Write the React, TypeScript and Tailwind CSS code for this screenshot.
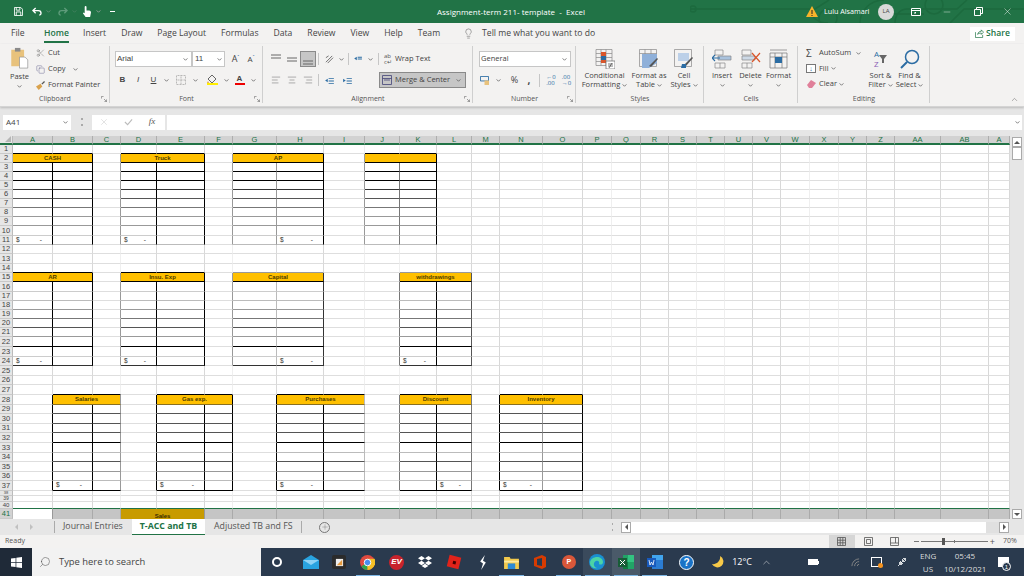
import type { ReactNode } from "react";
import { AlignCenter, AlignLeft, AlignRight, ChevronUp, Copy, Lightbulb, Minus, Plus, Scissors, Search, X } from "lucide-react";

const columns = ["A", "B", "C", "D", "E", "F", "G", "H", "I", "J", "K", "L", "M", "N", "O", "P", "Q", "R", "S", "T", "U", "V", "W", "X", "Y", "Z", "AA", "AB", "A"];
const lightCols = [2, 5, 8, 9, 13, 15, 18, 19, 22, 23];

const rightLine: Record<string, string> = {
  k: "border-r-black",
  "3": "border-r-[#333]",
  "5": "border-r-[#555]",
  "7": "border-r-[#777]",
  "9": "border-r-[#999]",
  b: "border-r-[#bbb]",
};
const bottomLine: Record<string, string> = {
  k: "border-b-black",
  "3": "border-b-[#333]",
  "5": "border-b-[#555]",
  "7": "border-b-[#777]",
  "9": "border-b-[#999]",
  b: "border-b-[#bbb]",
  c: "border-b-[#ccc]",
};

type Account = { name: string; row: number; col: number; top: string; lines: string; left: string; mid: string; right: string; total: number };

// row = header row, the rows under it use `lines` for their bottom border
const accounts: Account[] = [
  { name: "CASH", row: 2, col: 0, top: "k", lines: "kkk35799c", left: "", mid: "k", right: "k", total: 0 },
  { name: "Truck", row: 2, col: 3, top: "k", lines: "kkk35799c", left: "9", mid: "k", right: "k", total: 3 },
  { name: "AP", row: 2, col: 6, top: "k", lines: "kkk35799c", left: "9", mid: "9", right: "k", total: 7 },
  { name: "", row: 2, col: 9, top: "k", lines: "kkk35799c", left: "9", mid: "7", right: "k", total: -1 },
  { name: "AR", row: 15, col: 0, top: "k", lines: "kcb9759kc", left: "", mid: "k", right: "k", total: 0 },
  { name: "Insu. Exp", row: 15, col: 3, top: "k", lines: "kcb9759kc", left: "9", mid: "k", right: "k", total: 3 },
  { name: "Capital", row: 15, col: 6, top: "9", lines: "kcb9759kc", left: "9", mid: "b", right: "3", total: 7 },
  { name: "withdrawings", row: 15, col: 10, top: "9", lines: "7cb9759kc", left: "7", mid: "k", right: "5", total: 10 },
  { name: "Salaries", row: 28, col: 1, top: "k", lines: "k555kb59b", left: "k", mid: "k", right: "9", total: 1 },
  { name: "Gas exp.", row: 28, col: 4, top: "k", lines: "k555kb59b", left: "k", mid: "k", right: "k", total: 4 },
  { name: "Purchases", row: 28, col: 7, top: "k", lines: "k555kb59b", left: "k", mid: "k", right: "b", total: 7 },
  { name: "Discount", row: 28, col: 10, top: "k", lines: "7555kb59b", left: "7", mid: "k", right: "7", total: 11 },
  { name: "Inventory", row: 28, col: 13, top: "k", lines: "k555kb59b", left: "k", mid: "9", right: "k", total: 13 },
];

function bottomOf(r: number, c: number) {
  for (const a of accounts) {
    if (c !== a.col && c !== a.col + 1) continue;
    if (r === a.row - 1) return bottomLine[a.top];
    if (r > a.row && r <= a.row + 9) return r === a.row + 9 ? bottomLine[a.row === 2 ? "b" : a.row === 15 ? "3" : "k"] : bottomLine[a.lines[r - a.row]];
  }
  return r === 40 ? "border-b-[#217346]" : "border-b-[#dedede]";
}

function rightOf(r: number, c: number) {
  for (const a of accounts) {
    if (r < a.row || r > a.row + 9) continue;
    if (c === a.col - 1 && a.left) return rightLine[a.left];
    if (c === a.col && r > a.row) return rightLine[a.mid];
    if (c === a.col + 1) return rightLine[a.right];
  }
  return lightCols.includes(c) ? "border-r-[#efefef]" : "border-r-[#d8d8d8]";
}

function SheetCell({ r, c }: { r: number; c: number }) {
  const header = accounts.find((a) => a.row === r && a.col === c);
  const covered = accounts.find((a) => a.row === r && a.col + 1 === c);
  if (covered) return null;

  if (r === 41) {
    if (c === 4) return null;
    if (c === 3) {
      return <div className="col-span-2 overflow-hidden bg-[#c89b00] border-r border-r-[#999] text-center text-[6px] font-bold leading-[15px] text-[#3a2c00]">Sales</div>;
    }
    return <div className={`border-r ${c === 0 ? "bg-white border-r-[#999]" : "bg-[#c5c5c5] border-r-[#aaa]"}`} />;
  }

  if (header) {
    return (
      <div className={`col-span-2 flex items-center justify-center overflow-hidden bg-[#ffc000] border-r border-b text-[6px] font-bold text-[#4a3a00] ${rightLine[header.right]} ${header.row === 28 ? "border-b-[#8a7020]" : "border-b-black"}`}>
        {header.name}
      </div>
    );
  }

  const total = accounts.find((a) => a.row + 9 === r && a.total === c);
  return (
    <div className={`min-w-0 border-r border-b ${rightOf(r, c)} ${bottomOf(r, c)} ${total ? "flex items-center justify-between pl-[3px] pr-[10px] text-[6.5px] leading-none text-[#333]" : ""}`}>
      {total && (
        <>
          <span>$</span>
          <span>-</span>
        </>
      )}
    </div>
  );
}

function rowLabelSize(r: number) {
  if (r === 38) return "text-[4px]";
  if (r === 39) return "text-[5px]";
  if (r === 40) return "text-[6px]";
  return "text-[7.5px]";
}

function Sheet() {
  const rows = Array.from({ length: 41 }, (_, i) => i + 1);
  return (
    <div className="grid w-[1010px] grid-cols-[13px_40px_40px_28px_36px_48px_28px_44px_47px_41px_35px_37px_35px_28px_43px_40px_29px_29px_28px_28px_28px_28px_28px_29px_29px_28px_28px_46px_48px_21px] grid-rows-[9px_9px_9px_9px_9px_9px_9px_9px_9px_9px_10px_9px_9px_10px_9px_9px_10px_9px_9px_9px_9px_9px_10px_10px_9px_10px_9px_10px_10px_9px_10px_9px_10px_10px_9px_10px_9px_10px_5px_6px_7px_10px] font-['Liberation_Sans',sans-serif]">
      <div className="flex items-end justify-end border-r border-b-2 border-r-[#bbb] border-b-[#217346] bg-[#e6e6e6] pr-[1px] pb-[1px]">
        <div className="h-0 w-0 border-b-[6px] border-l-[6px] border-b-[#b5b5b5] border-l-transparent" />
      </div>
      {columns.map((label, i) => (
        <div key={i} className="flex items-center justify-center overflow-hidden border-r border-b-2 border-r-[#aeaeae] border-b-[#217346] bg-[#d2d2d2] text-[7.5px] leading-none text-[#217346]">
          {label}
        </div>
      ))}
      {rows.flatMap((r) => [
        <div key={`h${r}`} className={`flex items-center justify-center overflow-hidden border-r border-b border-r-[#bbb] border-b-[#c9c9c9] leading-none ${rowLabelSize(r)} ${r === 41 ? "bg-[#d2d2d2] text-[#217346]" : "bg-[#e6e6e6] text-[#444]"}`}>
          {r}
        </div>,
        ...columns.map((_, c) => <SheetCell key={`${r}-${c}`} r={r} c={c} />),
      ])}
    </div>
  );
}

function Chev({ className = "" }: { className?: string }) {
  return (
    <svg viewBox="0 0 6 4" className={`h-[3px] w-[5px] shrink-0 ${className}`} fill="none" stroke="#555" strokeWidth="1">
      <path d="M.5.5 3 3 5.5.5" />
    </svg>
  );
}

function Group({ width, label, launcher, children }: { width: string; label: string; launcher?: boolean; children: ReactNode }) {
  return (
    <div className={`relative flex shrink-0 flex-col ${width}`}>
      <div className="min-h-0 flex-1">{children}</div>
      <div className="h-[13px] pb-[2px] text-center text-[7px] leading-[11px] text-[#555]">{label}</div>
      <div className="absolute top-[2px] right-0 bottom-[3px] w-px bg-[#cfcfcf]" />
      {launcher && (
        <svg viewBox="0 0 7 7" className="absolute right-[3px] bottom-[4px] h-[6px] w-[6px]" fill="none" stroke="#777" strokeWidth=".8">
          <path d="M.5 3V.5H3M3.5 3.5l3 3M6.500 4v2.500H4" />
        </svg>
      )}
    </div>
  );
}

function BigButton({ width, top, bottom, arrow, children }: { width: string; top: string; bottom?: string; arrow?: boolean; children: ReactNode }) {
  return (
    <div className={`flex shrink-0 flex-col items-center ${width}`}>
      <div className="flex h-[21px] items-end justify-center">{children}</div>
      <div className="mt-[1px] text-[7.5px] leading-[10px] whitespace-nowrap text-[#444]">{top}</div>
      <div className="flex h-[10px] items-center gap-[2px] text-[7.5px] whitespace-nowrap text-[#444]">
        {bottom}
        {arrow && <Chev />}
      </div>
    </div>
  );
}

function Slot({ width, children }: { width: string; children?: ReactNode }) {
  return <div className={`flex shrink-0 items-center justify-center ${width}`}>{children}</div>;
}

function Lines({ rows }: { rows: string }) {
  return (
    <svg viewBox="0 0 12 12" className="h-[12px] w-[12px]" stroke="#666" strokeWidth="1">
      <path d={rows} />
    </svg>
  );
}

function TitleBar() {
  return (
    <div className="relative flex h-[23px] shrink-0 items-center bg-[#217346] text-white">
      <svg viewBox="0 0 334 23" className="absolute top-0 right-0 h-[23px] w-[334px]" fill="none" stroke="#1c6a3e" strokeWidth="1.500">
        <path d="M0 9h30M30 9h95l14-9M120 9c0 8 8 14 18 14M170 23c0-12 10-23 24-23M205 23c0-8 5-14 12-14h50l10-9M190 14h44M260 23l14-14h60" />
        <circle cx="138" cy="18" r="9" />
        <circle cx="244" cy="5" r="9" />
        <circle cx="3" cy="9" r="3" />
      </svg>
      <div className="relative flex items-center">
        <Slot width="w-[10px] ml-[13px]">
          <svg viewBox="0 0 10 10" className="h-[9px] w-[9px]" fill="none" stroke="white" strokeWidth="1">
            <path d="M.5.5h7l2 2v7H.5zM2.500.5v3h4v-3M2.500 9.500v-4h5v4" />
          </svg>
        </Slot>
        <Slot width="w-[10px] ml-[9px]">
          <svg viewBox="0 0 11 10" className="h-[9px] w-[10px]" fill="none" stroke="white" strokeWidth="1.500">
            <path d="M4 1 1 4l3 3M1 4h6c2 0 3 1.500 3 3s-1 2-2 2" />
          </svg>
        </Slot>
        <Slot width="w-[12px]"><Chev className="opacity-60 invert" /></Slot>
        <Slot width="w-[18px]">
          <svg viewBox="0 0 11 10" className="h-[9px] w-[10px]" fill="none" stroke="#5f9c7b" strokeWidth="1.500">
            <path d="M7 1l3 3-3 3M10 4H4C2 4 1 5.500 1 7s1 2 2 2" />
          </svg>
        </Slot>
        <Slot width="w-[5px]"><Chev className="opacity-30 invert" /></Slot>
        <Slot width="w-[18px]">
          <svg viewBox="0 0 10 12" className="h-[11px] w-[9px]" fill="white">
            <path d="M3 1a1 1 0 0 1 2 0v4h3c1 0 2 1 2 2l-1 5H4L1 8l1-1 1 1z" />
          </svg>
        </Slot>
        <Slot width="w-[6px]"><Chev className="invert" /></Slot>
        <Slot width="w-[22px]">
          <div className="h-[2px] w-[5px] border-t border-white" />
        </Slot>
      </div>
      <div className="relative ml-[313px] w-[150px] text-center text-[8px] whitespace-pre">Assignment-term 211- template  -  Excel</div>
      <div className="relative ml-[220px] flex items-center">
        <svg viewBox="0 0 12 11" className="h-[11px] w-[12px]">
          <path d="M6 0 12 11H0z" fill="#f7b32b" />
          <path d="M6 4v4M6 9v1" stroke="#222" strokeWidth="1" />
        </svg>
      </div>
      <div className="relative ml-[6px] w-[48px] text-[7.2px] whitespace-nowrap">Lulu Alsamari</div>
      <div className="relative ml-[6px] flex h-[16px] w-[16px] items-center justify-center rounded-full bg-[#d9d9d9] text-[6px] text-[#444]">LA</div>
      <svg viewBox="0 0 10 8" className="relative ml-[17px] h-[8px] w-[10px]" fill="none" stroke="white" strokeWidth="1">
        <path d="M.5.500h9v7h-9zM.5 2.500h9M3 5h2l-1-1" />
      </svg>
      <Minus className="relative ml-[21px] h-[10px] w-[10px]" strokeWidth={1} />
      <svg viewBox="0 0 9 9" className="relative ml-[22px] h-[9px] w-[9px]" fill="none" stroke="white" strokeWidth="1">
        <path d="M.5 2.500h6v6h-6zM2.500 2.500v-2h6v6h-2" />
      </svg>
      <X className="relative ml-[19px] h-[11px] w-[11px]" strokeWidth={1} />
    </div>
  );
}

function MenuTabs() {
  const tabs = ["Insert", "Draw", "Page Layout", "Formulas", "Data", "Review", "View", "Help", "Team"];
  return (
    <div className="flex h-[21px] shrink-0 items-center bg-[#f3f2f1] text-[8.6px] text-[#444]">
      <div className="ml-[11px] w-[33px]">File</div>
      <div className="relative flex h-full w-[39px] items-center font-semibold text-[#217346]">
        Home
        <div className="absolute bottom-[1px] left-0 h-[2px] w-[25px] bg-[#217346]" />
      </div>
      <div className="flex gap-[15px] whitespace-nowrap">
        {tabs.map((t) => (
          <span key={t}>{t}</span>
        ))}
      </div>
      <Lightbulb className="ml-[23px] h-[11px] w-[11px]" strokeWidth={1} />
      <div className="ml-[8px] whitespace-nowrap">Tell me what you want to do</div>
      <div className="mr-[9px] ml-auto flex h-[14px] w-[45px] items-center justify-center gap-[2px] bg-white font-semibold text-[#217346]">
        <svg viewBox="0 0 10 10" className="h-[9px] w-[9px]" fill="none" stroke="#217346" strokeWidth=".8">
          <path d="M.5 3.500v6h8v-3M3 6c0-2 2-3.500 4-3.500V1l2.500 2.500L7 6V4.500C5 4.500 3.500 5 3 6z" />
        </svg>
        Share
      </div>
    </div>
  );
}

function Ribbon() {
  return (
    <div className="relative flex h-[63px] shrink-0 border-b border-[#d4d4d4] bg-[#f3f2f1] text-[7.5px] text-[#444] shadow-[0_1px_2px_#bbb]">
      <Group width="w-[110px]" label="Clipboard" launcher>
        <div className="flex">
          <div className="ml-[9px] flex w-[21px] flex-col items-center">
            <svg viewBox="0 0 20 24" className="mt-[3px] h-[22px] w-[19px]">
              <path d="M1 3h14v18H1z" fill="#e8c27c" />
              <path d="M5 1h6v4H5z" fill="#8a8a8a" />
              <path d="M10 11h6l3 3v9h-9z" fill="white" stroke="#8a8a8a" strokeWidth=".7" />
            </svg>
            <div className="mt-[2px] leading-[10px]">Paste</div>
            <Chev className="mt-[4px]" />
          </div>
          <div className="mt-[1px] ml-[6px] flex flex-col">
            <div className="flex h-[16px] items-center gap-[3px]"><Scissors className="h-[10px] w-[9px] text-[#555]" strokeWidth={1} />Cut</div>
            <div className="flex h-[16px] items-center gap-[3px]"><Copy className="h-[9px] w-[9px] text-[#447]" strokeWidth={1} />Copy<Chev className="ml-[4px]" /></div>
            <div className="flex h-[16px] items-center gap-[3px] whitespace-nowrap">
              <svg viewBox="0 0 10 10" className="h-[9px] w-[9px]"><path d="M0 6 5 3l2 3-4 4z" fill="#d9a24d" /><path d="M6 3l3-3 1 1-3 3z" fill="#555" /></svg>
              Format Painter
            </div>
          </div>
        </div>
      </Group>
      <Group width="w-[153px]" label="Font" launcher>
        <div className="flex flex-col gap-[5px] pt-[7px] pl-[5px]">
          <div className="flex h-[16px] items-center">
            <div className="flex h-full w-[77px] items-center justify-between border border-[#c6c6c6] bg-white pr-[3px] pl-[1px] font-['Liberation_Sans',sans-serif] text-[8px]">Arial<Chev /></div>
            <div className="flex h-full w-[33px] items-center justify-between border border-[#c6c6c6] bg-white px-[2px] font-['Liberation_Sans',sans-serif] text-[8px]">11<Chev /></div>
            <Slot width="w-[17px] text-[9px] ml-[2px]">A<sup className="text-[5px] text-[#2b6ca3]">ˆ</sup></Slot>
            <Slot width="w-[14px] text-[8px]">A<sup className="text-[5px] text-[#2b6ca3]">ˇ</sup></Slot>
          </div>
          <div className="flex h-[16px] items-center font-['Liberation_Sans',sans-serif] text-[8px] text-[#444]">
            <Slot width="w-[15px] ml-[0px] font-bold">B</Slot>
            <Slot width="w-[16px] italic">I</Slot>
            <Slot width="w-[15px] underline">U</Slot>
            <Slot width="w-[11px]"><Chev /></Slot>
            <Slot width="w-[18px]">
              <svg viewBox="0 0 10 10" className="h-[10px] w-[10px]" fill="none" stroke="#aaa" strokeWidth=".8" strokeDasharray="1 .5"><path d="M.5.5h9v9h-9zM5 .5v9M.5 5h9" /></svg>
            </Slot>
            <Slot width="w-[11px]"><Chev /></Slot>
            <Slot width="w-[22px]">
              <div className="flex flex-col items-center">
                <svg viewBox="0 0 10 8" className="h-[8px] w-[10px]"><path d="M5 0 9 4 5 8 1 4z" fill="none" stroke="#666" /><path d="M1 6l1 2H0z" fill="#e8a33d" /></svg>
                <div className="h-[2px] w-[11px] bg-[#ffee00]" />
              </div>
            </Slot>
            <Slot width="w-[7px]"><Chev /></Slot>
            <Slot width="w-[19px]">
              <div className="flex flex-col items-center leading-[8px] font-bold">A<div className="h-[2px] w-[10px] bg-[#e00]" /></div>
            </Slot>
            <Slot width="w-[8px]"><Chev /></Slot>
          </div>
        </div>
      </Group>
      <Group width="w-[210px]" label="Alignment" launcher>
        <div className="flex flex-col gap-[5px] pt-[7px] pl-[5px]">
          <div className="flex h-[16px] items-center">
            <Slot width="w-[16px]"><Lines rows="M1 2h10M1 5h10" /></Slot>
            <Slot width="w-[16px]"><Lines rows="M1 5h10M1 8h10" /></Slot>
            <Slot width="w-[16px] h-[16px] bg-[#c6c6c6] border border-[#8a8a8a]"><Lines rows="M1 8h10M1 11h10" /></Slot>
            <div className="mx-[2px] h-[12px] w-px bg-[#c6c6c6]" />
            <Slot width="w-[17px]">
              <svg viewBox="0 0 10 10" className="h-[9px] w-[9px]" fill="none" stroke="#666"><path d="M1 8 8 1M3 9l6-6M1 3l3-2" /></svg>
            </Slot>
            <Slot width="w-[7px]"><Chev /></Slot>
            <div className="mx-[3px] h-[12px] w-px bg-[#c6c6c6]" />
            <Slot width="w-[12px]">
              <svg viewBox="0 0 10 7" className="h-[6px] w-[9px]"><path d="M0 3 3 1v4zM4 1h5v1H4zM4 3h5v1H4z" fill="#2b6ca3" /></svg>
            </Slot>
            <Slot width="w-[12px]"><Chev /></Slot>
            <div className="mx-[2px] h-[12px] w-px bg-[#c6c6c6]" />
            <span className="ml-[3px] text-[6px] leading-[6px] text-[#555]">ab<br />c↵</span>
            <span className="ml-[3px] whitespace-nowrap">Wrap Text</span>
          </div>
          <div className="flex h-[16px] items-center">
            <Slot width="w-[16px]"><AlignLeft className="h-[10px] w-[10px] text-[#666]" strokeWidth={1.2} /></Slot>
            <Slot width="w-[16px]"><AlignCenter className="h-[10px] w-[10px] text-[#666]" strokeWidth={1.2} /></Slot>
            <Slot width="w-[16px]"><AlignRight className="h-[10px] w-[10px] text-[#666]" strokeWidth={1.2} /></Slot>
            <div className="mx-[2px] h-[12px] w-px bg-[#c6c6c6]" />
            <Slot width="w-[16px]">
              <svg viewBox="0 0 10 8" className="h-[7px] w-[9px]"><path d="M0 4 3 2v4zM4 1h6v1H4zM4 4h6v1H4zM4 7h6v1H4z" fill="#2b6ca3" /></svg>
            </Slot>
            <Slot width="w-[20px]">
              <svg viewBox="0 0 10 8" className="h-[7px] w-[9px]"><path d="M3 4 0 2v4zM4 1h6v1H4zM4 4h6v1H4zM4 7h6v1H4z" fill="#2b6ca3" /></svg>
            </Slot>
            <div className="ml-[22px] flex h-[16px] w-[87px] items-center gap-[3px] border border-[#8a8a8a] bg-[#c6c6c6] px-[2px] whitespace-nowrap">
              <svg viewBox="0 0 10 10" className="h-[10px] w-[10px]" fill="none" stroke="#447" strokeWidth=".8"><path d="M.5.5h9v9h-9zM.5 3.500h9M2 5h6" /></svg>
              Merge &amp; Center
              <Chev className="ml-auto mr-[2px]" />
            </div>
          </div>
        </div>
      </Group>
      <Group width="w-[103px]" label="Number" launcher>
        <div className="flex flex-col gap-[5px] pt-[7px] pl-[6px]">
          <div className="flex h-[16px] w-[92px] items-center justify-between border border-[#c6c6c6] bg-white pr-[3px] pl-[1px] text-[7.5px]">General<Chev /></div>
          <div className="flex h-[16px] items-center">
            <Slot width="w-[11px]">
              <svg viewBox="0 0 10 10" className="h-[9px] w-[9px]" fill="none" stroke="#2b6ca3"><path d="M.5.5h9v5h-9z" /><path d="M5 5h5v5H5z" fill="#e8c27c" stroke="none" /></svg>
            </Slot>
            <Slot width="w-[17px]"><Chev /></Slot>
            <Slot width="w-[15px] text-[9px]">%</Slot>
            <Slot width="w-[14px] text-[10px] font-bold">,</Slot>
            <div className="mx-[3px] h-[13px] w-px bg-[#c6c6c6]" />
            <Slot width="w-[16px] text-[6px] leading-[6px] text-[#2b6ca3]"><span>←0<br />.00</span></Slot>
            <Slot width="w-[15px] text-[6px] leading-[6px] text-[#2b6ca3]"><span>.00<br />→0</span></Slot>
          </div>
        </div>
      </Group>
      <Group width="w-[128px]" label="Styles">
        <div className="flex pt-[4px] pl-[4px]">
          <BigButton width="w-[49px]" top="Conditional" bottom="Formatting" arrow>
            <svg viewBox="0 0 20 20" className="h-[20px] w-[20px]" fill="none" stroke="#888" strokeWidth=".7">
              <path d="M1 .5h16v16H1zM1 4.500h16M1 8.500h16M1 12.500h16M6 .5v16M11 .5v16" />
              <path d="M6 3h5v4H6z" fill="#d9562b" stroke="none" />
              <path d="M6 7h5v4H6z" fill="#2b6ca3" stroke="none" />
              <path d="M6 11h5v3H6z" fill="#d9562b" stroke="none" />
              <path d="M11 12h9v8h-9z" fill="white" stroke="#666" />
              <path d="M13 15h5M13 17h5M17 14l-3 5" stroke="#444" />
            </svg>
          </BigButton>
          <BigButton width="w-[40px]" top="Format as" bottom="Table" arrow>
            <svg viewBox="0 0 20 20" className="h-[20px] w-[20px]" fill="none" stroke="#888" strokeWidth=".7">
              <path d="M.5.5h17v17H.5zM.5 4.500h17M6 .5v17M12 .5v17" />
              <path d="M3 5h15v9l-8 5H3z" fill="#8fb0d9" stroke="none" />
              <path d="M10 17l8-8 1 1-7 8z" fill="#555" stroke="none" />
            </svg>
          </BigButton>
          <BigButton width="w-[30px]" top="Cell" bottom="Styles" arrow>
            <svg viewBox="0 0 20 20" className="h-[20px] w-[20px]" fill="none" stroke="#888" strokeWidth=".7">
              <path d="M.5.5h17v17H.5z" />
              <path d="M4 4h11v8H4z" fill="#bcd0e8" stroke="none" />
              <path d="M10 16l8-8 1 1-7 8z" fill="#555" stroke="none" />
              <path d="M8 15h4v4H7z" fill="#2b6ca3" stroke="none" />
            </svg>
          </BigButton>
        </div>
      </Group>
      <Group width="w-[94px]" label="Cells">
        <div className="flex pt-[4px] pl-[4px]">
          <BigButton width="w-[28px]" top="Insert" arrow>
            <svg viewBox="0 0 20 20" className="h-[20px] w-[20px]" fill="none" stroke="#888" strokeWidth=".7">
              <path d="M3 1h8v5H3zM3 14h10v5H3zM8 14v5" />
              <path d="M6 7h13v4H6z" fill="#a9c2dd" stroke="#888" />
              <path d="M0 9h8M3 6 0 9l3 3" stroke="#2b6ca3" strokeWidth="1.200" />
            </svg>
          </BigButton>
          <BigButton width="w-[29px]" top="Delete" arrow>
            <svg viewBox="0 0 20 20" className="h-[20px] w-[20px]" fill="none" stroke="#888" strokeWidth=".7">
              <path d="M1 1h9v5H1zM1 14h10v5H1zM6 14v5" />
              <path d="M1 7h13v4H1z" fill="#cdd9e6" stroke="#888" />
              <path d="M11 4l8 9M19 4l-8 9" stroke="#d9562b" strokeWidth="1.200" />
            </svg>
          </BigButton>
          <BigButton width="w-[27px]" top="Format" arrow>
            <svg viewBox="0 0 20 20" className="h-[20px] w-[20px]" fill="none" stroke="#777" strokeWidth=".7">
              <path d="M1 4h17v15H1zM1 8h17M6 4v15M13 4v15M1 1h17" />
              <path d="M6 8h7v6H6z" fill="#2b6ca3" stroke="none" />
            </svg>
          </BigButton>
        </div>
      </Group>
      <Group width="w-[132px]" label="Editing">
        <div className="flex pl-[8px]">
          <div className="flex w-[60px] flex-col pt-[1px]">
            <div className="flex h-[16px] items-center"><span className="w-[13px] text-[10px] leading-none text-[#444]">Σ</span>AutoSum<Chev className="ml-[5px]" /></div>
            <div className="flex h-[15px] items-center">
              <span className="mr-[3px] flex h-[9px] w-[10px] items-center justify-center border border-[#777] bg-white text-[7px] leading-none text-[#2b6ca3]">↓</span>
              Fill
              <Chev className="ml-[2px]" />
            </div>
            <div className="flex h-[16px] items-center">
              <svg viewBox="0 0 10 8" className="mr-[3px] h-[8px] w-[10px]"><path d="M1 5l4-5 5 3-4 5H3z" fill="#e0809a" /></svg>
              Clear
              <Chev className="ml-[2px]" />
            </div>
          </div>
          <div className="flex pt-[4px]">
            <BigButton width="w-[29px]" top="Sort &" bottom="Filter" arrow>
              <div className="flex items-center">
                <span className="flex flex-col text-[8px] leading-[10px]"><span className="text-[#2b6ca3]">A</span><span className="text-[#8a5cb5]">Z</span></span>
                <svg viewBox="0 0 8 8" className="h-[8px] w-[8px]"><path d="M0 0h8L5 4v4H3V4z" fill="#666" /></svg>
              </div>
            </BigButton>
            <BigButton width="w-[29px]" top="Find &" bottom="Select" arrow>
              <svg viewBox="0 0 20 20" className="h-[20px] w-[20px]" fill="none" stroke="#2b6ca3" strokeWidth="1.500">
                <circle cx="12" cy="8" r="6.500" />
                <path d="M7 13l-6 6" strokeWidth="2" />
              </svg>
            </BigButton>
          </div>
        </div>
      </Group>
      <ChevronUp className="absolute right-[5px] bottom-[2px] h-[9px] w-[9px] text-[#555]" strokeWidth={1.2} />
    </div>
  );
}

function FormulaBar() {
  return (
    <div className="flex h-[29px] shrink-0 items-center bg-[#e6e6e6] pt-[1px] pl-[3px] text-[8px] text-[#444]">
      <div className="flex h-[15px] w-[68px] items-center justify-between bg-white px-[3px]">A41<Chev /></div>
      <div className="ml-[10px] flex h-[8px] w-[2px] flex-col justify-between">
        <div className="h-[2px] w-[2px] bg-[#aaa]" />
        <div className="h-[2px] w-[2px] bg-[#aaa]" />
      </div>
      <div className="ml-[9px] flex h-[15px] w-[73px] items-center bg-white text-[#bbb]">
        <Slot width="w-[24px]"><X className="h-[10px] w-[10px]" strokeWidth={1} /></Slot>
        <Slot width="w-[24px]">
          <svg viewBox="0 0 10 8" className="h-[8px] w-[9px]" fill="none" stroke="#bbb" strokeWidth="1.200"><path d="M1 4l3 3 5-6" /></svg>
        </Slot>
        <Slot width="w-[24px]"><span className="font-['Liberation_Serif',serif] text-[9px] text-[#555] italic">fx</span></Slot>
      </div>
      <div className="ml-[2px] flex h-[15px] w-[855px] items-center justify-end bg-white pr-[2px]"><Chev /></div>
    </div>
  );
}

function VScroll() {
  return (
    <div className="flex w-[14px] flex-col items-center bg-[#e6e6e6] pt-[1px]">
      <div className="flex h-[10px] w-[10px] items-center justify-center border border-[#aaa] bg-white">
        <div className="h-0 w-0 border-x-[3px] border-b-[3px] border-x-transparent border-b-[#555]" />
      </div>
      <div className="h-[13px] w-[10px] border border-[#aaa] bg-white" />
      <div className="flex-1" />
      <div className="flex h-[10px] w-[10px] items-center justify-center border border-[#aaa] bg-white">
        <div className="h-0 w-0 border-x-[3px] border-t-[3px] border-x-transparent border-t-[#555]" />
      </div>
    </div>
  );
}

function SheetTabs() {
  return (
    <div className="flex h-[16px] shrink-0 items-center bg-[#e6e6e6] text-[8.8px] text-[#555]">
      <div className="ml-[15px] h-0 w-0 border-y-[3px] border-r-[3px] border-y-transparent border-r-[#c0c0c0]" />
      <div className="ml-[12px] h-0 w-0 border-y-[3px] border-l-[3px] border-y-transparent border-l-[#c0c0c0]" />
      <div className="ml-[21px] h-[12px] w-px bg-[#aaa]" />
      <div className="ml-[8px] w-[59px] whitespace-nowrap">Journal Entries</div>
      <div className="ml-[10px] flex h-full w-[73px] items-center justify-center border-b border-b-[#217346] bg-white font-bold whitespace-nowrap text-[#217346]">T-ACC and TB</div>
      <div className="ml-[9px] w-[78px] whitespace-nowrap">Adjusted TB and FS</div>
      <div className="ml-[9px] h-[12px] w-px bg-[#aaa]" />
      <div className="ml-[17px] flex h-[11px] w-[11px] items-center justify-center rounded-full border border-[#777]">
        <Plus className="h-[8px] w-[8px]" strokeWidth={1} />
      </div>
      <div className="ml-[282px] flex h-[8px] w-[2px] flex-col justify-between">
        <div className="h-[2px] w-[1px] bg-[#aaa]" />
        <div className="h-[2px] w-[1px] bg-[#aaa]" />
      </div>
      <div className="ml-[7px] flex h-[11px] w-[388px] items-center bg-[#e0e0e0]">
        <div className="flex h-full w-[10px] items-center justify-center border border-[#aaa] bg-white">
          <div className="h-0 w-0 border-y-[3px] border-r-[3px] border-y-transparent border-r-[#555]" />
        </div>
        <div className="h-full w-[355px] bg-white" />
        <div className="ml-auto flex h-full w-[10px] items-center justify-center border border-[#aaa] bg-white">
          <div className="h-0 w-0 border-y-[3px] border-l-[3px] border-y-transparent border-l-[#555]" />
        </div>
      </div>
    </div>
  );
}

function StatusBar() {
  return (
    <div className="flex h-[13px] shrink-0 items-center bg-[#f3f2f1] text-[7px] text-[#555]">
      <div className="ml-[5px]">Ready</div>
      <div className="ml-auto flex h-full w-[26px] items-center justify-center bg-[#d6d6d6]">
        <svg viewBox="0 0 9 9" className="h-[9px] w-[9px]" fill="none" stroke="#555" strokeWidth=".8"><path d="M.5.5h8v8h-8zM.5 3.200h8M.5 5.800h8M3.200.5v8M5.800.5v8" /></svg>
      </div>
      <Slot width="w-[27px]">
        <svg viewBox="0 0 9 9" className="h-[9px] w-[9px]" fill="none" stroke="#555" strokeWidth=".8"><path d="M.5.5h8v8h-8zM2.500 2.500h4v4h-4z" /></svg>
      </Slot>
      <Slot width="w-[26px]">
        <svg viewBox="0 0 9 9" className="h-[9px] w-[9px]" fill="none" stroke="#555" strokeWidth=".8"><path d="M.5.5h8v8h-8zM.5 6h8M5.500.5V6" /></svg>
      </Slot>
      <div className="ml-[6px] h-px w-[5px] bg-[#777]" />
      <div className="relative ml-[2px] h-px w-[67px] bg-[#777]">
        <div className="absolute top-[-3px] left-[21px] h-[7px] w-[3px] bg-[#555]" />
        <div className="absolute top-[-1px] left-[33px] h-[3px] w-px bg-[#777]" />
      </div>
      <div className="ml-[2px] text-[9px] leading-none">+</div>
      <div className="ml-[8px] mr-[9px] w-[12px] text-[7px]">70%</div>
    </div>
  );
}

function TaskIcon({ bg = "", line, children }: { bg?: string; line?: boolean; children: ReactNode }) {
  return (
    <div className={`relative flex h-full w-[28.700px] shrink-0 items-center justify-center ${bg}`}>
      {children}
      {line && <div className="absolute right-[2px] bottom-0 left-[2px] h-px bg-[#7fb8e6]" />}
    </div>
  );
}

function Taskbar() {
  return (
    <div className="flex h-[28px] shrink-0 items-center bg-[#2a3a4e] font-['Liberation_Sans',sans-serif] text-white">
      <div className="flex h-full w-[32px] items-center justify-center bg-[#1f2a38]">
        <svg viewBox="0 0 12 12" className="h-[11px] w-[11px]" fill="white"><path d="M0 1.700 5 1v4.500H0zM5.800.9 12 0v5.500H5.800zM0 6.300h5V11l-5-.7zM5.800 6.300H12V12l-6.200-.9z" /></svg>
      </div>
      <div className="flex h-full w-[229px] items-center bg-[#f2f2f2] pl-[7px] text-[#444]">
        <Search className="h-[12px] w-[12px] -scale-x-100" strokeWidth={1} />
        <span className="ml-[8px] font-['Open_Sans',sans-serif] text-[9.4px] whitespace-nowrap">Type here to search</span>
      </div>
      <div className="ml-[2px] flex h-full items-center">
        <TaskIcon>
          <div className="h-[10px] w-[10px] rounded-full border-2 border-white" />
        </TaskIcon>
        <div className="w-[4.500px]" />
        <TaskIcon>
          <svg viewBox="0 0 16 14" className="h-[14px] w-[16px]"><path d="M0 5 8 0l8 5v9H0z" fill="#29a3e0" /><path d="M0 5l8 5 8-5" fill="#8fd3f5" /></svg>
        </TaskIcon>
        <TaskIcon>
          <div className="flex h-[14px] w-[14px] items-center justify-center rounded-[2px] bg-[#2b2b2b]">
            <svg viewBox="0 0 10 10" className="h-[9px] w-[9px]"><path d="M1 1h8v8H1z" fill="#eee" /><path d="M2 8l6-6v6z" fill="#e89a3c" /></svg>
          </div>
        </TaskIcon>
        <TaskIcon line>
          <svg viewBox="0 0 16 16" className="h-[15px] w-[15px]">
            <circle cx="8" cy="8" r="8" fill="#e04a3f" />
            <path d="M8 8 1.500 12A8 8 0 0 0 8 16z" fill="#2fa650" />
            <path d="M8 8l6.800 4A8 8 0 0 1 8 16z" fill="#f6c026" />
            <path d="M8 4h7.500A8 8 0 0 1 14 13L8 8z" fill="#f6c026" />
            <circle cx="8" cy="8" r="3.500" fill="#4a8ef0" stroke="white" />
          </svg>
        </TaskIcon>
        <TaskIcon>
          <div className="flex h-[15px] w-[15px] items-center justify-center rounded-full bg-[#c8232c] text-[8px] font-bold italic text-white">EV</div>
        </TaskIcon>
        <TaskIcon>
          <svg viewBox="0 0 14 12" className="h-[12px] w-[14px]" fill="white"><path d="M3.500 0 7 2.200 3.500 4.500 0 2.200zM10.500 0 14 2.200l-3.500 2.300L7 2.200zM3.500 4.700 7 7 3.500 9.200 0 7zM10.500 4.700 14 7l-3.500 2.200L7 7zM3.600 10 7 7.800l3.400 2.200L7 12z" /></svg>
        </TaskIcon>
        <TaskIcon>
          <div className="flex h-[12px] w-[12px] rotate-[14deg] items-center justify-center bg-[#e2231a]">
            <div className="h-[3px] w-[3px] bg-[#400]" />
          </div>
        </TaskIcon>
        <TaskIcon>
          <svg viewBox="0 0 8 16" className="h-[15px] w-[8px]" fill="white"><path d="M6 0 1 7l3 2-2 7 5-8-3-2z" /></svg>
        </TaskIcon>
        <TaskIcon line>
          <svg viewBox="0 0 16 14" className="h-[13px] w-[15px]"><path d="M0 1h6l1 2h9v11H0z" fill="#f2c94c" /><path d="M0 5h16v2H0z" fill="#fce9a0" /><path d="M4 8h8v6H4z" fill="#2b8ad6" /></svg>
        </TaskIcon>
        <TaskIcon>
          <svg viewBox="0 0 12 14" className="h-[14px] w-[12px]"><path d="M0 3 8 0l4 2v10l-4 2-8-3z" fill="#d83b01" /><path d="M3 4l5-1v8l-5-1z" fill="#2a3a4e" /></svg>
        </TaskIcon>
        <TaskIcon line>
          <div className="flex h-[14px] w-[14px] items-center justify-center rounded-full bg-[#d9573a] text-[7px] font-bold text-white">P</div>
        </TaskIcon>
        <TaskIcon bg="bg-[#3a4a5c]" line>
          <svg viewBox="0 0 16 16" className="h-[16px] w-[16px]">
            <circle cx="8" cy="8" r="8" fill="#1a8fd0" />
            <path d="M1 9c0-4 4-6 7-6s6 2 6 5-3 3-4 2c1-2-1-4-3-3-3 1-3 6 1 7-4 1-7-2-7-5z" fill="#4cd3a5" />
          </svg>
        </TaskIcon>
        <TaskIcon bg="bg-[#4a5a69]" line>
          <svg viewBox="0 0 16 14" className="h-[14px] w-[16px]">
            <path d="M5 0h11v14H5z" fill="#21a366" />
            <path d="M10 0h6v7h-6z" fill="#33c481" />
            <path d="M5 7h5v7H5z" fill="#107c41" />
            <path d="M0 3h9v9H0z" fill="#185c37" />
            <path d="M2 5l5 5M7 5l-5 5" stroke="white" />
          </svg>
        </TaskIcon>
        <TaskIcon line>
          <svg viewBox="0 0 16 14" className="h-[14px] w-[16px]">
            <path d="M5 0h11v14H5z" fill="#2b7cd3" />
            <path d="M5 0h11v5H5z" fill="#41a5ee" />
            <path d="M0 3h9v9H0z" fill="#185abd" />
            <path d="M2 5l1 5 1.500-3L6 10l1-5" stroke="white" fill="none" strokeWidth=".8" />
          </svg>
        </TaskIcon>
      </div>
      <div className="ml-[10px] flex h-[15px] w-[15px] items-center justify-center rounded-full border border-white bg-[#1a73c7] text-[10px] font-bold">?</div>
      <svg viewBox="0 0 12 12" className="ml-[18px] h-[12px] w-[12px]"><path d="M8 0a6 6 0 1 1-8 8c4 1 9-3 8-8z" fill="#f7c948" /></svg>
      <span className="ml-[8px] font-['Open_Sans',sans-serif] text-[9px] whitespace-nowrap">12°C</span>
      <ChevronUp className="ml-[9px] h-[11px] w-[11px]" strokeWidth={1} />
      <div className="ml-[36px] flex items-center">
        <div className="h-[6px] w-[10px] border border-white bg-white" />
        <div className="h-[3px] w-px bg-white" />
      </div>
      <svg viewBox="0 0 10 10" className="ml-[32px] h-[9px] w-[9px]" fill="none" stroke="#888"><path d="M1 9a8 8 0 0 1 8-8M4 9a5 5 0 0 1 5-5M7 9a2 2 0 0 1 2-2" /></svg>
      <div className="relative ml-[11px] h-[10px] w-[11px] border border-white">
        <div className="absolute -right-[2px] -bottom-[2px] h-[5px] w-[5px] rounded-full bg-[#f7931e]" />
      </div>
      <svg viewBox="0 0 10 10" className="ml-[15px] h-[10px] w-[10px]" fill="none" stroke="white" strokeWidth=".8"><path d="M1 9l8-8M3 4l3 3M2 6l2 2 1-1-2-2zM5 3l2 2 2-2-2-2z" /></svg>
      <div className="ml-[13px] w-[16px] text-center font-['Open_Sans',sans-serif] text-[8px] leading-[13px] text-[#ddd]">ENG<br />US</div>
      <div className="ml-[8px] w-[42px] text-center font-['Open_Sans',sans-serif] text-[8px] leading-[13px] text-[#ddd]">05:45<br />10/12/2021</div>
      <div className="relative ml-[12px] h-[10px] w-[11px] border border-white bg-white">
        <div className="absolute -right-[3px] -bottom-[5px] flex h-[9px] w-[9px] items-center justify-center rounded-full border border-white bg-[#2a3a4e] text-[6px] leading-none">1</div>
      </div>
    </div>
  );
}

export default function App() {
  return (
    <div className="flex h-[576px] w-[1024px] flex-col overflow-hidden bg-white font-['Open_Sans',sans-serif]">
      <TitleBar />
      <MenuTabs />
      <Ribbon />
      <FormulaBar />
      <div className="flex h-[383px] shrink-0 overflow-hidden">
        <Sheet />
        <VScroll />
      </div>
      <SheetTabs />
      <StatusBar />
      <Taskbar />
    </div>
  );
}
